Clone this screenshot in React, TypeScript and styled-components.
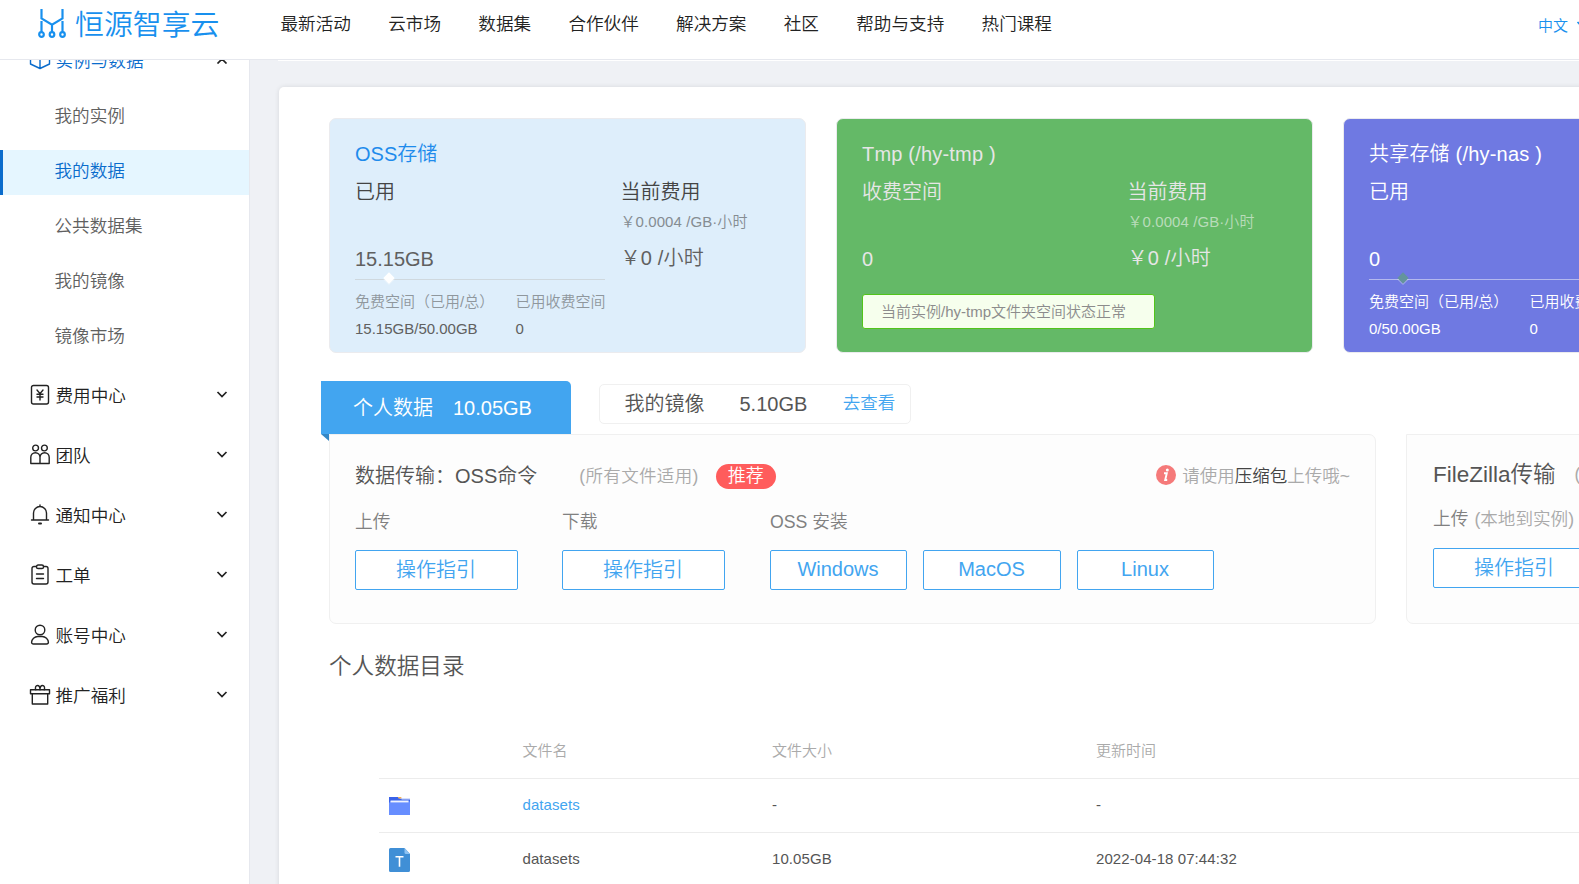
import React from 'react';
import styled, { createGlobalStyle } from 'styled-components';

const GlobalStyle = createGlobalStyle`
  *, *::before, *::after { box-sizing: border-box; }
  html, body { margin: 0; padding: 0; overflow: hidden; }
  body {
    font-family: "Liberation Sans", "Noto Sans CJK SC", sans-serif;
    font-weight: 350;
    color: #555;
    background: #eff1f5;
  }
`;

const Page = styled.div`
  display: flex;
  flex-direction: column;
  width: 1579px;
  height: 884px;
  overflow: hidden;
`;

const Header = styled.header`
  display: flex;
  align-items: flex-start;
  flex: none;
  height: 60px;
  padding-left: 38px;
  background: #fff;
  border-bottom: 1px solid #e6e8ee;
`;

const Logo = styled.div`
  display: flex;
  align-items: flex-start;
  width: 242.5px;
  height: 47px;
  color: #1890ee;
  font-size: 28.9px;
  line-height: 50px;
  white-space: nowrap;
  svg { margin: 8px 9px 0 0; flex: none; }
`;

const Nav = styled.nav`
  display: flex;
  gap: 37.3px;
  font-size: 17.6px;
  line-height: 49px;
  color: #222;
  white-space: nowrap;
`;

const Language = styled.div`
  display: flex;
  align-items: center;
  gap: 8px;
  margin-left: auto;
  margin-right: -9px;
  height: 49px;
  font-size: 15px;
  color: #1890ee;
  white-space: nowrap;
`;

const Body = styled.div`
  display: flex;
  flex: 1;
  min-height: 0;
`;

const Sidebar = styled.aside`
  flex: none;
  width: 250px;
  background: #fff;
  border-right: 1px solid #e6e8ee;
  overflow: hidden;
`;

const SidebarScroll = styled.div`
  margin-top: -30px;
`;

const Group = styled.div<{ $active?: boolean }>`
  display: flex;
  align-items: center;
  height: 60px;
  padding: 0 21px 0 29px;
  font-size: 17.6px;
  color: ${p => (p.$active ? '#0a6ccc' : '#222')};
  > svg:last-child { margin-left: auto; color: #222; }
`;

const GroupLabel = styled.span`
  margin-left: 4.5px;
  line-height: 24px;
  padding-top: 1px;
`;

const SubItems = styled.div`
  display: flex;
  flex-direction: column;
  gap: 10px;
  padding: 5px 0 5px;
`;

const SubItem = styled.div<{ $active?: boolean }>`
  height: 45px;
  line-height: 43px;
  padding-left: ${p => (p.$active ? 51.5 : 54.5)}px;
  font-size: 17.6px;
  color: ${p => (p.$active ? '#0a6ccc' : '#606060')};
  background: ${p => (p.$active ? '#e5f6ff' : 'transparent')};
  border-left: ${p => (p.$active ? '3px solid #0a6ccc' : '0')};
`;

const Content = styled.main`
  flex: 1;
  min-width: 0;
  padding-left: 28px;
  overflow: hidden;
`;

const Strip = styled.div`
  height: 1px;
  background: #fff;
  margin-bottom: 26px;
`;

const Sheet = styled.section`
  width: 1620px;
  height: 900px;
  margin-left: 1px;
  padding: 31px 0 0 50px;
  background: #fff;
  border-radius: 5px;
  box-shadow: 0 0 5px rgba(0, 0, 0, 0.1);
`;

const Cards = styled.div`
  display: flex;
  gap: 30px;
`;

const Card = styled.article<{ $bg: string; $fg: string }>`
  flex: none;
  width: 477px;
  height: 235px;
  padding: 17px 0 0 25px;
  border: 1px solid #ebebee;
  border-radius: 7px;
  background: ${p => p.$bg};
  color: ${p => p.$fg};
  font-size: 20px;
  white-space: nowrap;
`;

const CardTitle = styled.div<{ $color?: string; $spacing?: number }>`
  height: 37px;
  line-height: 37px;
  letter-spacing: ${p => p.$spacing || 0}px;
  color: ${p => p.$color || 'inherit'};
`;

const CardColumns = styled.div`
  display: flex;
`;

const CardLeft = styled.div`
  width: 265.5px;
`;

const CardLabel = styled.div`
  height: 37px;
  line-height: 38px;
`;

const CardValue = styled.div<{ $color?: string }>`
  margin-top: 31px;
  height: 36px;
  line-height: 36px;
  color: ${p => p.$color || 'inherit'};
`;

const Rule = styled.div<{ $color: string }>`
  position: relative;
  width: 250px;
  height: 1px;
  margin-top: 2px;
  background: ${p => p.$color};
`;

const Diamond = styled.i<{ $color: string }>`
  position: absolute;
  left: 30px;
  top: -5px;
  width: 8px;
  height: 8px;
  transform: rotate(45deg);
  background: ${p => p.$color};
  box-shadow: 1px 1px 0 rgba(255, 255, 255, 0.35);
`;

const Quota = styled.div`
  display: grid;
  grid-template-columns: 160.5px auto;
  grid-auto-rows: 27px;
  padding-top: 8px;
  font-size: 15px;
  line-height: 27px;
`;

const QuotaLabel = styled.span<{ $color: string }>`
  color: ${p => p.$color};
`;

const Rate = styled.div<{ $color: string }>`
  height: 24px;
  line-height: 24px;
  font-size: 15px;
  letter-spacing: 0.08px;
  color: ${p => p.$color};
`;

const Price = styled.div<{ $color?: string }>`
  margin-top: 6px;
  height: 36px;
  line-height: 36px;
  letter-spacing: 0.2px;
  color: ${p => p.$color || 'inherit'};
`;

const Status = styled.div`
  width: 293px;
  height: 35px;
  margin-top: 17px;
  padding-left: 18px;
  border: 1px solid #52c41a;
  border-radius: 3px;
  background: #f6ffed;
  color: #8c8c8c;
  font-size: 15px;
  line-height: 34px;
`;

const Tabs = styled.div`
  display: flex;
  align-items: flex-start;
  height: 53px;
  margin: 28px 0 0 -8px;
  white-space: nowrap;
`;

const ActiveTab = styled.div`
  position: relative;
  display: flex;
  gap: 20px;
  width: 250px;
  height: 53px;
  padding-left: 32px;
  border-radius: 0 5px 0 0;
  background: #42a5f0;
  color: #fff;
  font-size: 20px;
  line-height: 54px;
  &::after {
    content: '';
    position: absolute;
    left: 0;
    top: 53px;
    border-top: 7px solid #3487c6;
    border-left: 8px solid transparent;
  }
`;

const ImageTab = styled.div`
  display: flex;
  width: 312px;
  height: 40px;
  margin: 3px 0 0 28px;
  padding-left: 24.5px;
  border: 1px solid #f0f0f0;
  border-radius: 5px;
  font-size: 20px;
  line-height: 39px;
`;

const TabSize = styled.span`
  margin-left: 35px;
`;

const TabLink = styled.a`
  margin-left: 35.5px;
  font-size: 17.5px;
  line-height: 36px;
  color: #42a5f0;
`;

const Panels = styled.div`
  display: flex;
  gap: 30px;
`;

const Panel = styled.section`
  flex: none;
  width: 1047px;
  height: 190px;
  padding: 19px 25px 0;
  border: 1px solid #f0f0f0;
  border-radius: 0 7px 7px 7px;
  background: #fdfdfd;
  white-space: nowrap;
`;

const SidePanel = styled(Panel)`
  width: 560px;
  padding: 17px 25px 0 26px;
`;

const PanelHead = styled.div`
  display: flex;
  align-items: center;
  height: 40px;
  font-size: 20px;
`;

const Applies = styled.span`
  margin-left: 42px;
  font-size: 17.5px;
  letter-spacing: 0.35px;
  color: #aaa;
`;

const Badge = styled.span`
  width: 60px;
  height: 25px;
  margin: 4px 0 0 17px;
  border-radius: 13px;
  background: #ff5c5c;
  color: #fff;
  font-size: 18px;
  line-height: 24px;
  text-align: center;
`;

const Hint = styled.span`
  display: flex;
  align-items: center;
  margin-left: auto;
  font-size: 17.5px;
  color: #aaa;
  svg { margin: 1px 6px 0 0; }
  b { font-weight: inherit; color: #444; }
`;

const Actions = styled.div`
  display: flex;
  margin-top: 10px;
`;

const ActionGroup = styled.div<{ $width?: number }>`
  width: ${p => (p.$width ? p.$width + 'px' : 'auto')};
  font-size: 17.7px;
  color: #808080;
`;

const ActionLabel = styled.div<{ $raised?: boolean }>`
  height: 46px;
  line-height: ${p => (p.$raised ? 35 : 37)}px;
  small { font-size: 17.6px; color: #aaa; margin-left: 6px; }
`;

const ButtonRow = styled.div`
  display: flex;
  gap: 16px;
`;

const Button = styled.button<{ $width?: number; $latin?: boolean }>`
  width: ${p => p.$width || 163}px;
  height: 40px;
  padding: 0 1px ${p => (p.$latin ? 2 : 4)}px 0;
  border: 1px solid #42a5f0;
  border-radius: 2px;
  background: #fff;
  color: #42a5f0;
  font: inherit;
  font-size: 20px;
`;

const FileZillaTitle = styled.span`
  font-size: 22.5px;
`;

const SideApplies = styled(Applies)`
  margin-left: 19px;
`;

const Heading = styled.h2`
  margin: 25px 0 0;
  height: 36px;
  font-size: 22.6px;
  font-weight: inherit;
  line-height: 35px;
`;

const Table = styled.div`
  margin: 40px 0 0 50px;
`;

const Row = styled.div<{ $head?: boolean }>`
  display: grid;
  grid-template-columns: 143.5px 249.5px 324px 1fr;
  align-items: center;
  height: 54px;
  padding-bottom: ${p => (p.$head ? 4 : 3)}px;
  border-bottom: 1px solid #ececec;
  font-size: 15px;
  letter-spacing: ${p => (p.$head ? 0 : 0.08)}px;
  color: ${p => (p.$head ? '#aaa' : '#555')};
`;

const IconCell = styled.span`
  display: flex;
  padding-left: 10px;
  margin-top: 3px;
`;

const FileLink = styled.a`
  color: #42a5f0;
`;

const Svg = ({ children }: { children: React.ReactNode }) => (
  <svg width="22" height="22" viewBox="0 0 22 22" fill="none" stroke="currentColor" strokeWidth="1.4" strokeLinejoin="round" strokeLinecap="round">
    {children}
  </svg>
);

const CubeIcon = () => (
  <Svg><path d="M11 0.500 20.500 5v10L11 19.500 1.500 15V5ZM1.500 5 11 9.500 20.500 5M11 9.500v10" /></Svg>
);
const FeeIcon = () => (
  <Svg><rect x="2.500" y="1.500" width="17" height="18.500" rx="2" /><path d="m8 6 3 3.600L14 6M11 9.600V16M8 10.200h6M8 13h6" /></Svg>
);
const TeamIcon = () => (
  <Svg>
    <circle cx="6.600" cy="4" r="2.900" /><circle cx="15.400" cy="4" r="2.900" />
    <path d="M1.800 19.500v-6.200a4.600 4.600 0 0 1 9.200 0v6.200M11 13.300a4.600 4.600 0 0 1 9.200 0v6.200M1.800 19.500h18.400" />
  </Svg>
);
const BellIcon = () => (
  <Svg><path d="M2.500 16h17M4.500 16V9a6.500 6.500 0 0 1 13 0v7M11 1v1.300" /><path d="M10 19.500h2" strokeWidth="2" /></Svg>
);
const OrderIcon = () => (
  <Svg><path d="M7.500 2.500H5a2 2 0 0 0-2 2V18a2 2 0 0 0 2 2h12a2 2 0 0 0 2-2V4.500a2 2 0 0 0-2-2h-2.500" /><rect x="7.500" y="1" width="7" height="3.500" rx="1.600" /><path d="M7.500 10h7M7.500 14.500h7" /></Svg>
);
const UserIcon = () => (
  <Svg><circle cx="11" cy="6" r="4.800" /><path d="M4.500 20C3.200 20 2.600 19.300 2.600 18.300c0-3 3-5.800 6.200-5.800h4.400c3.200 0 6.200 2.800 6.200 5.800 0 1-.6 1.700-1.900 1.700Z" /></Svg>
);
const GiftIcon = () => (
  <Svg><rect x="1.500" y="5.800" width="19" height="4" /><path d="M3.300 9.800V20h15.400V9.800M6.800 5.800C5.800 3.300 6.800 1.500 8.500 1.500S11 3.300 11 5.800c0-2.500.8-4.300 2.500-4.300s2.700 1.800 1.700 4.300" /></Svg>
);

const Chevron = ({ up }: { up?: boolean }) => (
  <svg width="12" height="8" viewBox="0 0 12 8" fill="none" stroke="currentColor" strokeWidth="1.700">
    <path d={up ? 'm1.500 7.500 4.500-4.500 4.500 4.500' : 'm1.500 1 4.500 4.500 4.500-4.500'} />
  </svg>
);

const LogoMark = () => (
  <svg width="28" height="31" viewBox="0 0 28 31" fill="none" stroke="currentColor" strokeWidth="2.200">
    <path d="M3.500 1v9.500L14 16.800 24.500 10.500V1M3.500 13V24M14 16.500V24M24.500 13V24" />
    <circle cx="3.500" cy="26.500" r="2.300" /><circle cx="14" cy="26.500" r="2.300" /><circle cx="24.500" cy="26.500" r="2.300" />
  </svg>
);

const InfoIcon = () => (
  <svg width="20" height="20" viewBox="0 0 20 20">
    <circle cx="10" cy="10" r="10" fill="#f57a7a" />
    <circle cx="11.300" cy="5" r="1.500" fill="#fff" />
    <path d="M8 8.300h2.800L9.200 15h2" fill="none" stroke="#fff" strokeWidth="1.900" />
  </svg>
);

const FolderIcon = () => (
  <svg width="21" height="18" viewBox="0 0 21 18">
    <path d="M0 0h9l2 1.500h10V18H0Z" fill="#3a62e8" />
    <path d="M9 0h3l1 1.500h-3.500Z" fill="#f5b25c" />
    <path d="M12.500 1h8.500v1.500h-8.500Z" fill="#d5defc" />
    <path d="M0 5.500h1l1-2h18l1 2V18H0Z" fill="#678eff" />
    <path d="M1.500 3.600h18v1.800h-18Z" fill="#f0f4ff" />
  </svg>
);

const TextFileIcon = () => (
  <svg width="21" height="24" viewBox="0 0 21 24">
    <path d="M1.500 0H15.500L21 6v16.500a1.500 1.500 0 0 1-1.500 1.500h-18A1.500 1.500 0 0 1 0 22.500v-21A1.500 1.500 0 0 1 1.500 0Z" fill="#408fd6" />
    <path d="M15.500 0 21 6h-4a1.500 1.500 0 0 1-1.500-1.500Z" fill="#8fc3f2" />
    <path d="M6.500 8.700h8M10.500 8.700v10" stroke="#fff" strokeWidth="1.600" fill="none" />
  </svg>
);

const navItems = ['最新活动', '云市场', '数据集', '合作伙伴', '解决方案', '社区', '帮助与支持', '热门课程'];
const subItems = ['我的实例', '我的数据', '公共数据集', '我的镜像', '镜像市场'];
const groups = [
  { label: '费用中心', Icon: FeeIcon },
  { label: '团队', Icon: TeamIcon },
  { label: '通知中心', Icon: BellIcon },
  { label: '工单', Icon: OrderIcon },
  { label: '账号中心', Icon: UserIcon },
  { label: '推广福利', Icon: GiftIcon },
];

export default function App() {
  return (
    <>
      <GlobalStyle />
      <Page>
        <Header>
          <Logo><LogoMark />恒源智享云</Logo>
          <Nav>{navItems.map(n => <span key={n}>{n}</span>)}</Nav>
          <Language>中文 <Chevron /></Language>
        </Header>
        <Body>
          <Sidebar>
            <SidebarScroll>
              <Group $active><CubeIcon /><GroupLabel>实例与数据</GroupLabel><Chevron up /></Group>
              <SubItems>
                {subItems.map((s, i) => <SubItem key={s} $active={i === 1}>{s}</SubItem>)}
              </SubItems>
              {groups.map(({ label, Icon }) => (
                <Group key={label}><Icon /><GroupLabel>{label}</GroupLabel><Chevron /></Group>
              ))}
            </SidebarScroll>
          </Sidebar>
          <Content>
            <Strip />
            <Sheet>
              <Cards>
                <Card $bg="#deeefb" $fg="#444">
                  <CardTitle $color="#1e8bec">OSS存储</CardTitle>
                  <CardColumns>
                    <CardLeft>
                      <CardLabel>已用</CardLabel>
                      <CardValue $color="#606060">15.15GB</CardValue>
                      <Rule $color="#cfd8de"><Diamond $color="#fff" /></Rule>
                      <Quota>
                        <QuotaLabel $color="#8f979d">免费空间（已用/总）</QuotaLabel>
                        <QuotaLabel $color="#8f979d">已用收费空间</QuotaLabel>
                        <QuotaLabel $color="#606060">15.15GB/50.00GB</QuotaLabel>
                        <QuotaLabel $color="#606060">0</QuotaLabel>
                      </Quota>
                    </CardLeft>
                    <div>
                      <CardLabel>当前费用</CardLabel>
                      <Rate $color="#858c92">￥0.0004 /GB·小时</Rate>
                      <Price $color="#606060">￥0 /小时</Price>
                    </div>
                  </CardColumns>
                </Card>
                <Card $bg="#64b967" $fg="#e6e6e6">
                  <CardTitle $spacing={0.2}>Tmp (/hy-tmp )</CardTitle>
                  <CardColumns>
                    <CardLeft>
                      <CardLabel>收费空间</CardLabel>
                      <CardValue>0</CardValue>
                      <Status>当前实例/hy-tmp文件夹空间状态正常</Status>
                    </CardLeft>
                    <div>
                      <CardLabel>当前费用</CardLabel>
                      <Rate $color="#b9dcba">￥0.0004 /GB·小时</Rate>
                      <Price>￥0 /小时</Price>
                    </div>
                  </CardColumns>
                </Card>
                <Card $bg="#6f79e2" $fg="#fff">
                  <CardTitle $spacing={0.2}>共享存储 (/hy-nas )</CardTitle>
                  <CardColumns>
                    <CardLeft>
                      <CardLabel>已用</CardLabel>
                      <CardValue>0</CardValue>
                      <Rule $color="#b4b9ee"><Diamond $color="#64949c" /></Rule>
                      <Quota>
                        <QuotaLabel $color="#fff">免费空间（已用/总）</QuotaLabel>
                        <QuotaLabel $color="#fff">已用收费空间</QuotaLabel>
                        <QuotaLabel $color="#fff">0/50.00GB</QuotaLabel>
                        <QuotaLabel $color="#fff">0</QuotaLabel>
                      </Quota>
                    </CardLeft>
                  </CardColumns>
                </Card>
              </Cards>

              <Tabs>
                <ActiveTab><span>个人数据</span><span>10.05GB</span></ActiveTab>
                <ImageTab>
                  <span>我的镜像</span>
                  <TabSize>5.10GB</TabSize>
                  <TabLink>去查看</TabLink>
                </ImageTab>
              </Tabs>

              <Panels>
                <Panel>
                  <PanelHead>
                    <span>数据传输：OSS命令</span>
                    <Applies>(所有文件适用)</Applies>
                    <Badge>推荐</Badge>
                    <Hint><InfoIcon />请使用<b>压缩包</b>上传哦~</Hint>
                  </PanelHead>
                  <Actions>
                    <ActionGroup $width={207}>
                      <ActionLabel>上传</ActionLabel>
                      <Button>操作指引</Button>
                    </ActionGroup>
                    <ActionGroup $width={208}>
                      <ActionLabel>下载</ActionLabel>
                      <Button>操作指引</Button>
                    </ActionGroup>
                    <ActionGroup>
                      <ActionLabel>OSS 安装</ActionLabel>
                      <ButtonRow>
                        <Button $latin $width={137}>Windows</Button>
                        <Button $latin $width={138}>MacOS</Button>
                        <Button $latin $width={137}>Linux</Button>
                      </ButtonRow>
                    </ActionGroup>
                  </Actions>
                </Panel>
                <SidePanel>
                  <PanelHead>
                    <FileZillaTitle>FileZilla传输</FileZillaTitle>
                    <SideApplies>(所有文件适用)</SideApplies>
                  </PanelHead>
                  <Actions>
                    <ActionGroup>
                      <ActionLabel $raised>上传<small>(本地到实例)</small></ActionLabel>
                      <Button>操作指引</Button>
                    </ActionGroup>
                  </Actions>
                </SidePanel>
              </Panels>

              <Heading>个人数据目录</Heading>
              <Table>
                <Row $head>
                  <span />
                  <span>文件名</span>
                  <span>文件大小</span>
                  <span>更新时间</span>
                </Row>
                <Row>
                  <IconCell><FolderIcon /></IconCell>
                  <FileLink>datasets</FileLink>
                  <span>-</span>
                  <span>-</span>
                </Row>
                <Row>
                  <IconCell><TextFileIcon /></IconCell>
                  <span>datasets</span>
                  <span>10.05GB</span>
                  <span>2022-04-18 07:44:32</span>
                </Row>
              </Table>
            </Sheet>
          </Content>
        </Body>
      </Page>
    </>
  );
}
